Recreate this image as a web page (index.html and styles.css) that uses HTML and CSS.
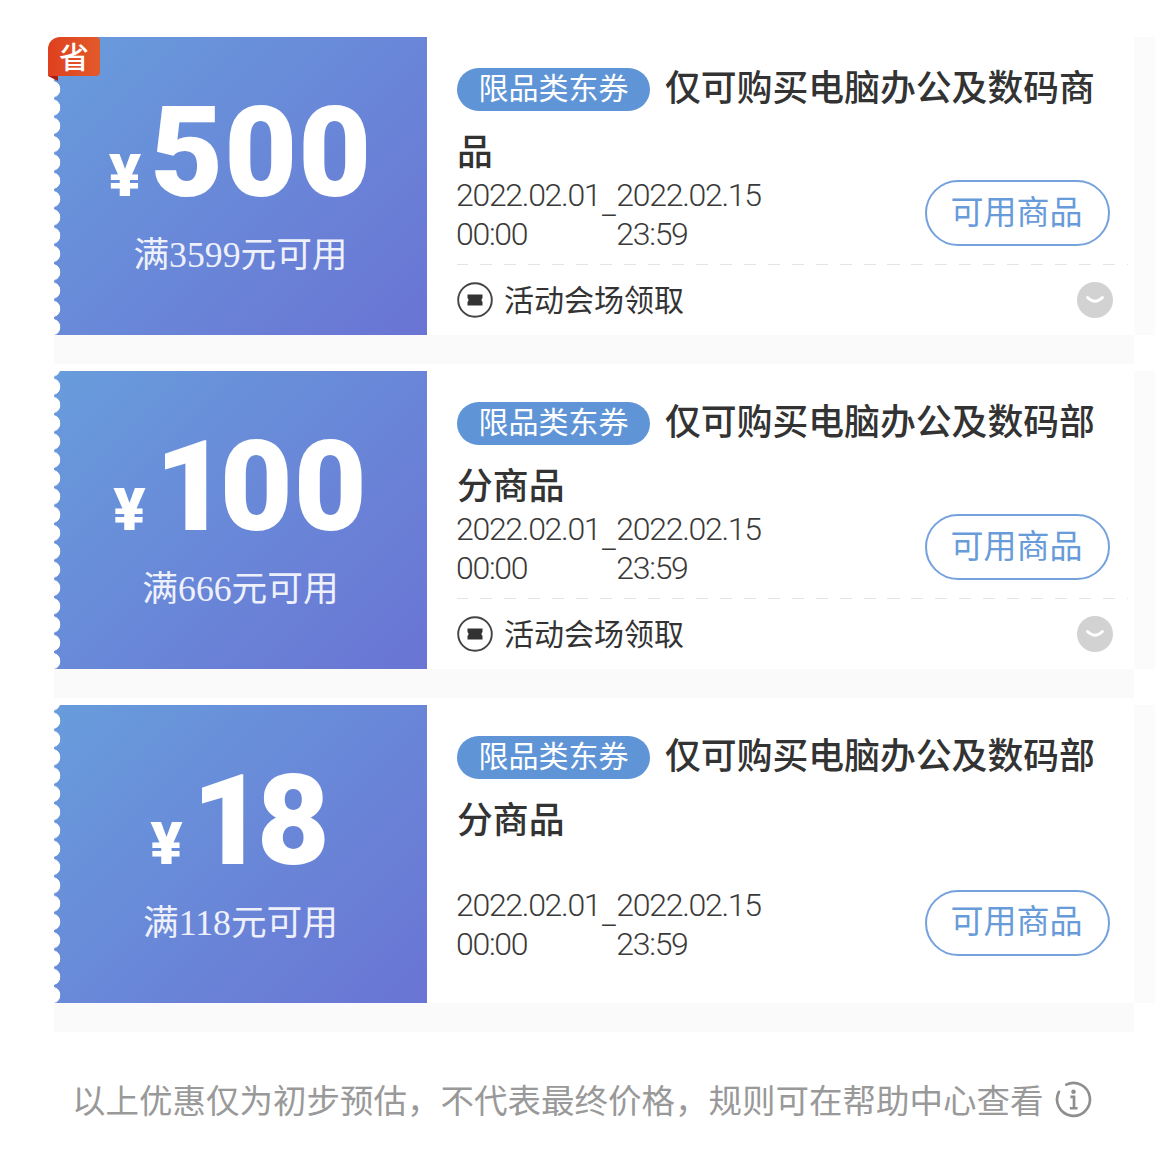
FILE: index.html
```html
<!DOCTYPE html>
<html lang="zh-CN">
<head>
    <meta charset="UTF-8">
    <meta name="viewport" content="width=device-width, initial-scale=1.0">
    <title>优惠券</title>
    <link rel="stylesheet" href="styles.css">
</head>
<body>
    <section class="coupon-list">
        <div class="coupon">
            <div class="badge">省</div>
            <div class="coupon-value">
                <div class="amount"><span class="yen">¥</span>500</div>
                <div class="threshold">满3599元可用</div>
            </div>
            <div class="coupon-info">
                <p class="title"><span class="tag">限品类东券</span>仅可购买电脑办公及数码商品</p>
                <div class="validity">
                    <div class="dates">
                        <div class="date-col">2022.02.01<br>00:00</div>
                        <span class="date-sep">_</span>
                        <div class="date-col">2022.02.15<br>23:59</div>
                    </div>
                    <button class="goods-btn">可用商品</button>
                </div>
                <div class="source">
                    <svg class="ticket-icon" viewBox="0 0 36 36"><circle cx="18" cy="18" r="16.8" fill="none" stroke="#444" stroke-width="1.900"/><path d="M10.500 12.500h15v3.500q-2 2 0 4v3.500h-15V20q2-2 0-4z" fill="#333"/></svg>
                    <span class="source-text">活动会场领取</span>
                    <svg class="more-icon" viewBox="0 0 36 36"><circle cx="18" cy="18" r="18" fill="#d2d2d2"/><path d="M10.500 15.500Q18 23 25.500 15.500" fill="none" stroke="#fff" stroke-width="2.800" stroke-linecap="round"/></svg>
                </div>
            </div>
        </div>

        <div class="coupon">
            <div class="coupon-value">
                <div class="amount"><span class="yen">¥</span><span class="digit-one">1</span>00</div>
                <div class="threshold">满666元可用</div>
            </div>
            <div class="coupon-info">
                <p class="title"><span class="tag">限品类东券</span>仅可购买电脑办公及数码部分商品</p>
                <div class="validity">
                    <div class="dates">
                        <div class="date-col">2022.02.01<br>00:00</div>
                        <span class="date-sep">_</span>
                        <div class="date-col">2022.02.15<br>23:59</div>
                    </div>
                    <button class="goods-btn">可用商品</button>
                </div>
                <div class="source">
                    <svg class="ticket-icon" viewBox="0 0 36 36"><circle cx="18" cy="18" r="16.8" fill="none" stroke="#444" stroke-width="1.900"/><path d="M10.500 12.500h15v3.500q-2 2 0 4v3.500h-15V20q2-2 0-4z" fill="#333"/></svg>
                    <span class="source-text">活动会场领取</span>
                    <svg class="more-icon" viewBox="0 0 36 36"><circle cx="18" cy="18" r="18" fill="#d2d2d2"/><path d="M10.500 15.500Q18 23 25.500 15.500" fill="none" stroke="#fff" stroke-width="2.800" stroke-linecap="round"/></svg>
                </div>
            </div>
        </div>

        <div class="coupon coupon-plain">
            <div class="coupon-value">
                <div class="amount"><span class="yen">¥</span><span class="digit-one">1</span>8</div>
                <div class="threshold">满118元可用</div>
            </div>
            <div class="coupon-info">
                <p class="title"><span class="tag">限品类东券</span>仅可购买电脑办公及数码部分商品</p>
                <div class="validity">
                    <div class="dates">
                        <div class="date-col">2022.02.01<br>00:00</div>
                        <span class="date-sep">_</span>
                        <div class="date-col">2022.02.15<br>23:59</div>
                    </div>
                    <button class="goods-btn">可用商品</button>
                </div>
            </div>
        </div>
    </section>
    <footer class="note">
        <span>以上优惠仅为初步预估，不代表最终价格，规则可在帮助中心查看</span>
        <svg class="info-icon" viewBox="0 0 36 36"><path d="M11 3.500A16 16 0 1 1 3.800 10.500" fill="none" stroke="#8e8e8e" stroke-width="2.600" stroke-linecap="round"/><circle cx="18" cy="10.500" r="2.200" fill="#8e8e8e"/><path d="M15 15.500h3.500V26M14.500 26.500h7.500" fill="none" stroke="#8e8e8e" stroke-width="2.600"/></svg>
    </footer>
</body>
</html>
```

FILE: styles.css
```css
body {
    margin: 0;
    padding: 37px 0 0 54px;
    background: #fff;
    font-family: "Noto Sans CJK SC", "Noto Sans", sans-serif;
    color: #333;
}

.coupon {
    position: relative;
    display: flex;
    width: 1080px;
    height: 298px;
    margin-bottom: 36px;
    background: #fff;
    box-shadow: 0 29px 0 #fafafa, 21px 0 0 #fbfbfb;
}

.badge {
    position: absolute;
    z-index: 2;
    left: -6px;
    top: 0;
    width: 52px;
    height: 39px;
    background: linear-gradient(90deg, #df401f, #e25a2a);
    border-radius: 12px 4px 4px 0;
    color: #fff;
    font-size: 30px;
    font-weight: 500;
    line-height: 37px;
    text-align: center;
}

.badge::after {
    content: "";
    position: absolute;
    left: 0;
    top: 39px;
    border-top: 5px solid #a81e14;
    border-left: 10px solid transparent;
}

.coupon-value {
    position: relative;
    width: 373px;
    flex: none;
    background: linear-gradient(135deg, #689cdc, #6a74d4);
    color: #fff;
    text-align: center;
}

/* scalloped left edge */
.coupon-value::before {
    content: "";
    position: absolute;
    left: 0;
    top: 0;
    bottom: 0;
    width: 7px;
    background: radial-gradient(circle at -2px 50%, #fff 8px, transparent 8.6px) 0 6.5px / 7px 18.3px repeat-y;
}

.amount {
    display: flex;
    justify-content: center;
    align-items: baseline;
    padding-top: 42px;
    font-family: Roboto, sans-serif;
    font-size: 126px;
    font-weight: 900;
    line-height: 148px;
    letter-spacing: 1px;
}

.yen {
    font-size: 60px;
    margin-right: 8px;
}

.digit-one {
    letter-spacing: -8px;
}

.threshold {
    margin-top: -19px;
    font-family: "Liberation Serif", "Noto Sans CJK SC", serif;
    font-size: 35.700px;
    line-height: 48px;
    color: #eef1fb;
}

.coupon-info {
    flex: 1;
    display: flex;
    flex-direction: column;
    min-width: 0;
    padding-left: 30px;
}

.title {
    margin: 16px 30px -7px 0;
    font-size: 35.850px;
    font-weight: 500;
    line-height: 64px;
    height: 128px;
    color: #333;
}

.tag {
    display: inline-block;
    width: 193px;
    height: 43px;
    margin-right: 15px;
    border-radius: 22px;
    background: #5f95d7;
    color: #fff;
    font-size: 30px;
    font-weight: 400;
    line-height: 37px;
    text-align: center;
    vertical-align: 2px;
}

.validity {
    display: flex;
    align-items: center;
    justify-content: space-between;
    height: 78px;
    margin-bottom: auto;
    padding-right: 24px;
}

.coupon-plain .validity {
    margin-top: auto;
    margin-bottom: auto;
}

.dates {
    display: flex;
    margin: 4px 0 0 -1px;
    font-family: Roboto, sans-serif;
    font-size: 32px;
    font-weight: 300;
    letter-spacing: -1.300px;
    line-height: 39px;
    color: #3a3a3a;
}

.date-sep {
    width: 16px;
    margin-top: 8px;
    text-align: center;
}

.goods-btn {
    width: 185px;
    height: 66px;
    border: 2px solid #75a2dc;
    border-radius: 33px;
    background: #fff;
    color: #689bd9;
    font-family: inherit;
    font-size: 33px;
    line-height: 1;
    padding: 0 2px 6px 0;
}

.source {
    display: flex;
    align-items: center;
    height: 70px;
    margin-right: 6px;
    padding-right: 15px;
    border-top: 1px dashed #e6e6e6;
    border-image: repeating-linear-gradient(90deg, #e4e4e4 0 12px, transparent 12px 23.900px) 1;
}

.ticket-icon {
    width: 36px;
    height: 36px;
    margin-right: 11px;
}

.source-text {
    flex: 1;
    margin-top: -4px;
    font-size: 30px;
    line-height: 40px;
}

.more-icon {
    width: 36px;
    height: 36px;
}

.note {
    display: flex;
    align-items: center;
    margin-top: 72px;
    padding-left: 18px;
    font-size: 33.500px;
    line-height: 48px;
    color: #999;
}

.info-icon {
    width: 37px;
    height: 37px;
    margin-left: 11px;
}
```
